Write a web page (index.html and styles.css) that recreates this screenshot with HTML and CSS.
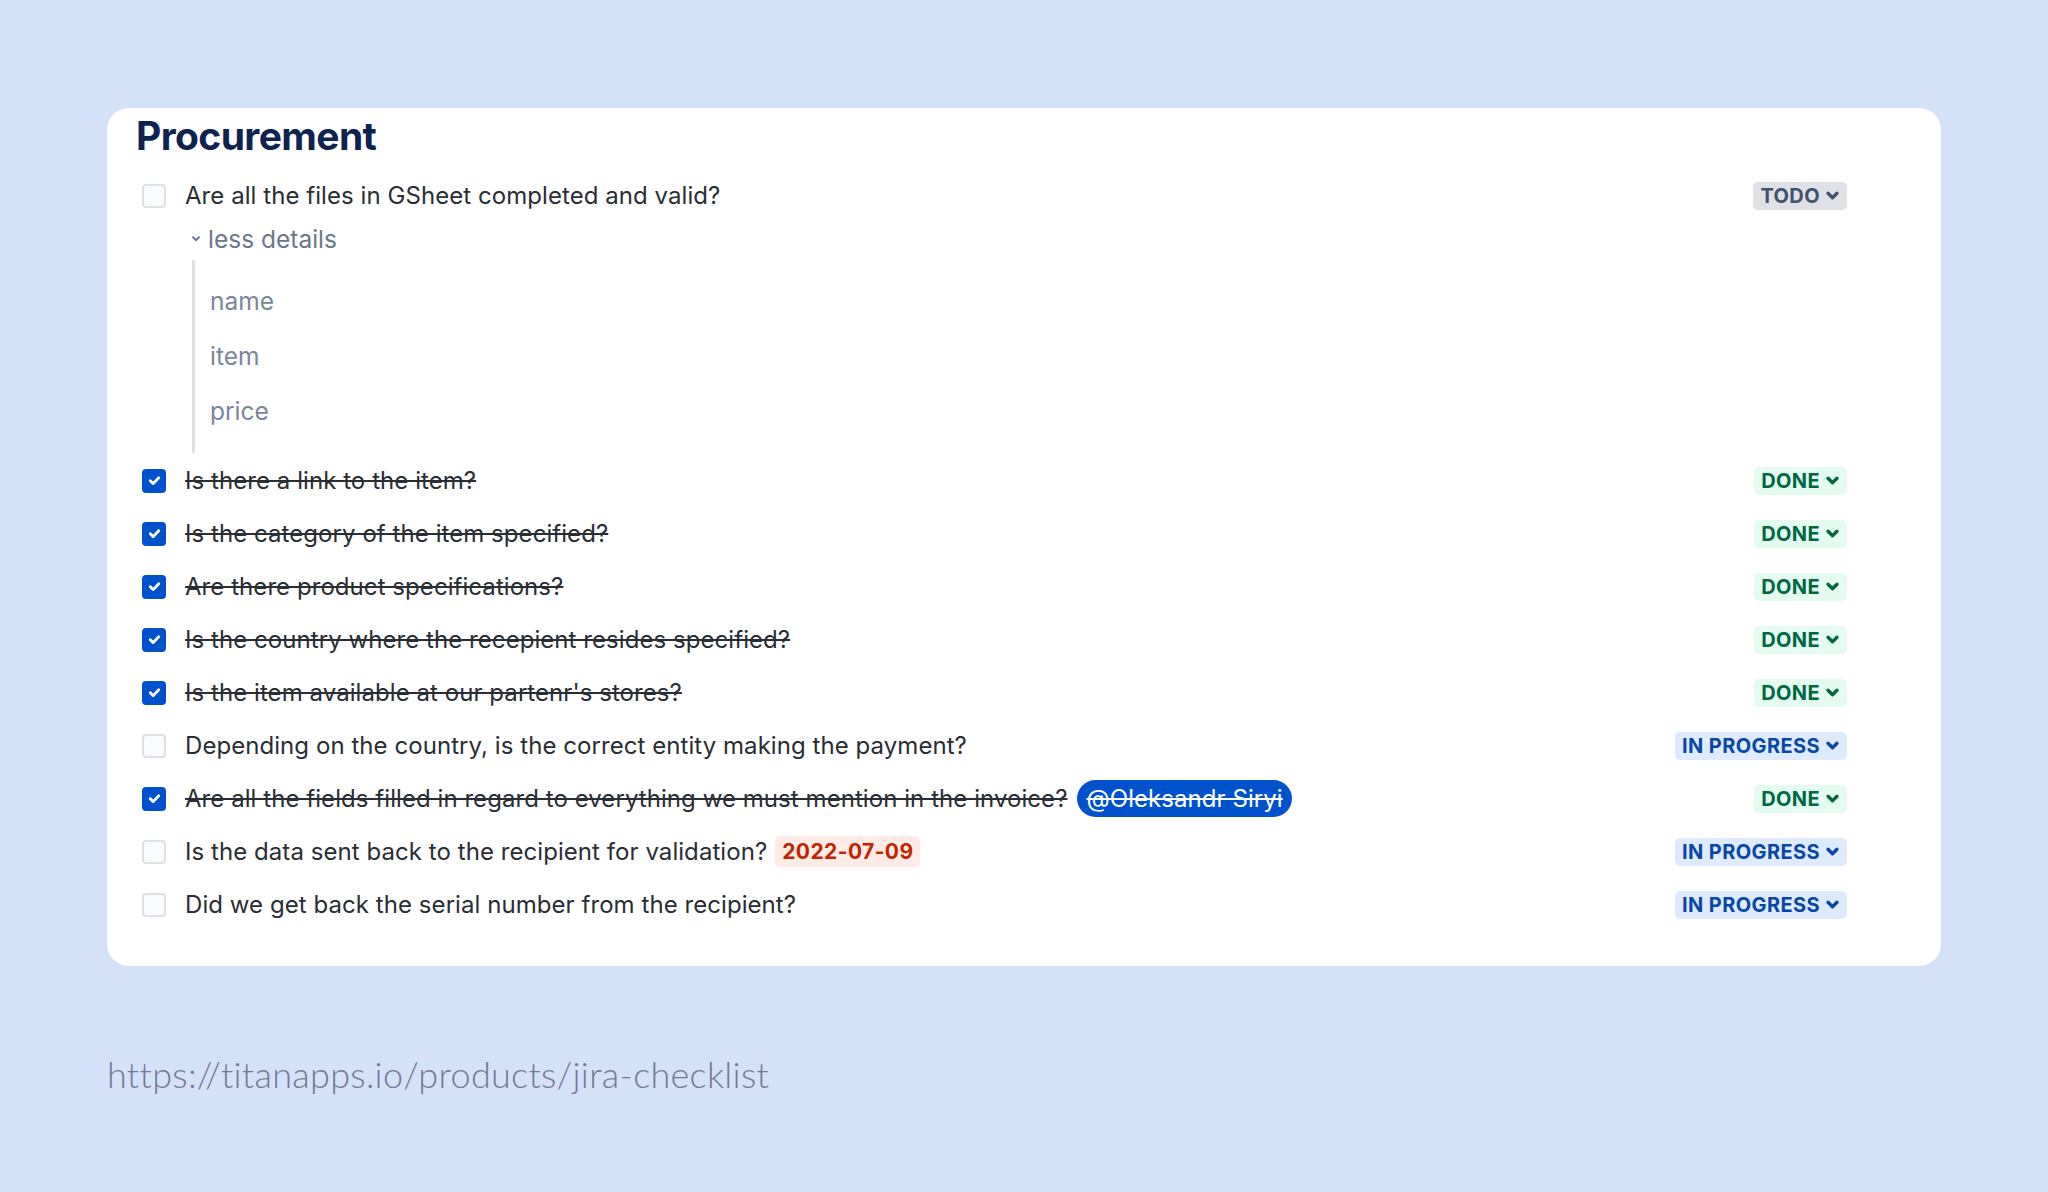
FILE: index.html
```html
<!DOCTYPE html>
<html lang="en">
<head>
    <meta charset="UTF-8" />
    <title>Procurement checklist</title>
    <link rel="stylesheet" href="styles.css">
</head>
<body>
    <div class="card">
        <h1>Procurement</h1>

        <div class="row">
            <span class="box"></span>
            <span class="text">Are all the files in GSheet completed and valid?</span>
            <span class="badge todo">TODO <svg viewBox="0 0 10 10"><path d="M2 3.5 L5 6.5 L8 3.5" /></svg></span>
        </div>
        <div class="toggle">
            <svg viewBox="0 0 10 10"><path d="M2.5 3.5 L5 6 L7.5 3.5" /></svg>
            <span>less details</span>
        </div>
        <div class="details">
            <div class="detail">name</div>
            <div class="detail">item</div>
            <div class="detail">price</div>
        </div>

        <div class="row checked">
            <span class="box"><svg viewBox="0 0 12 12"><path d="M3 6.2 L5.1 8.2 L9 4" /></svg></span>
            <span class="text">Is there a link to the item?</span>
            <span class="badge done">DONE <svg viewBox="0 0 10 10"><path d="M2 3.5 L5 6.5 L8 3.5" /></svg></span>
        </div>
        <div class="row checked">
            <span class="box"><svg viewBox="0 0 12 12"><path d="M3 6.2 L5.1 8.2 L9 4" /></svg></span>
            <span class="text">Is the category of the item specified?</span>
            <span class="badge done">DONE <svg viewBox="0 0 10 10"><path d="M2 3.5 L5 6.5 L8 3.5" /></svg></span>
        </div>
        <div class="row checked">
            <span class="box"><svg viewBox="0 0 12 12"><path d="M3 6.2 L5.1 8.2 L9 4" /></svg></span>
            <span class="text">Are there product specifications?</span>
            <span class="badge done">DONE <svg viewBox="0 0 10 10"><path d="M2 3.5 L5 6.5 L8 3.5" /></svg></span>
        </div>
        <div class="row checked">
            <span class="box"><svg viewBox="0 0 12 12"><path d="M3 6.2 L5.1 8.2 L9 4" /></svg></span>
            <span class="text">Is the country where the recepient resides specified?</span>
            <span class="badge done">DONE <svg viewBox="0 0 10 10"><path d="M2 3.5 L5 6.5 L8 3.5" /></svg></span>
        </div>
        <div class="row checked">
            <span class="box"><svg viewBox="0 0 12 12"><path d="M3 6.2 L5.1 8.2 L9 4" /></svg></span>
            <span class="text">Is the item available at our partenr's stores?</span>
            <span class="badge done">DONE <svg viewBox="0 0 10 10"><path d="M2 3.5 L5 6.5 L8 3.5" /></svg></span>
        </div>
        <div class="row">
            <span class="box"></span>
            <span class="text">Depending on the country, is the correct entity making the payment?</span>
            <span class="badge progress">IN PROGRESS <svg viewBox="0 0 10 10"><path d="M2 3.5 L5 6.5 L8 3.5" /></svg></span>
        </div>
        <div class="row checked">
            <span class="box"><svg viewBox="0 0 12 12"><path d="M3 6.2 L5.1 8.2 L9 4" /></svg></span>
            <span class="text">Are all the fields filled in regard to everything we must mention in the invoice?</span>
            <span class="mention">@Oleksandr Siryi</span>
            <span class="badge done">DONE <svg viewBox="0 0 10 10"><path d="M2 3.5 L5 6.5 L8 3.5" /></svg></span>
        </div>
        <div class="row">
            <span class="box"></span>
            <span class="text">Is the data sent back to the recipient for validation?</span>
            <span class="date">2022-07-09</span>
            <span class="badge progress">IN PROGRESS <svg viewBox="0 0 10 10"><path d="M2 3.5 L5 6.5 L8 3.5" /></svg></span>
        </div>
        <div class="row">
            <span class="box"></span>
            <span class="text">Did we get back the serial number from the recipient?</span>
            <span class="badge progress">IN PROGRESS <svg viewBox="0 0 10 10"><path d="M2 3.5 L5 6.5 L8 3.5" /></svg></span>
        </div>
    </div>

    <p class="link">https://titanapps.io/products/jira-checklist</p>
</body>
</html>
```

FILE: styles.css
```css
body {
    margin: 0;
    background: #d3e2f8;
    font-family: 'Inter', 'Roboto', sans-serif;
    padding: 108px 107px 0;
}

.card {
    background: #fff;
    border-radius: 22px;
    padding: 0 94px 35px 29px;
}

h1 {
    margin: 0;
    height: 61px;
    line-height: 56px;
    font-size: 39px;
    font-weight: 700;
    letter-spacing: -0.6px;
    color: #0f2350;
}

.row {
    display: flex;
    align-items: center;
    height: 53px;
    font-size: 24px;
    letter-spacing: 0.06px;
    color: #292d34;
}

.box {
    flex: none;
    width: 20px;
    height: 20px;
    margin: 0 19px 0 6px;
    border: 2px solid #dfe1e6;
    border-radius: 4px;
    background: #fafbfc;
    display: flex;
    align-items: center;
    justify-content: center;
}
.row.checked .box {
    background: #0052cc;
    border-color: #0052cc;
}
.box svg {
    width: 17px;
    height: 17px;
    fill: none;
    stroke: #fff;
    stroke-width: 2;
    stroke-linecap: round;
    stroke-linejoin: round;
}

.row.checked .text {
    text-decoration: line-through;
}

.mention {
    margin-left: 10px;
    padding: 0 9px;
    height: 37px;
    line-height: 37px;
    border-radius: 19px;
    background: #0052cc;
    color: #fff;
    text-decoration: line-through;
}

.date {
    margin-left: 8px;
    padding: 0 7px;
    height: 31px;
    line-height: 31px;
    border-radius: 5px;
    background: #ffebe6;
    color: #bf2600;
    font-weight: 700;
    font-size: 21px;
    letter-spacing: 0.4px;
}

.badge {
    margin-left: auto;
    display: flex;
    align-items: center;
    gap: 5px;
    height: 28px;
    padding: 0 7px;
    border-radius: 5px;
    font-size: 20px;
    font-weight: 700;
    letter-spacing: 0.4px;
}
.badge svg {
    width: 15px;
    height: 15px;
    fill: none;
    stroke: currentColor;
    stroke-width: 2.2;
    stroke-linecap: round;
    stroke-linejoin: round;
}
.badge.todo {
    background: #dfe1e6;
    color: #42526e;
}
.badge.done {
    background: #e3fcef;
    color: #006644;
}
.badge.progress {
    background: #deebff;
    color: #0747a6;
}

.toggle {
    display: flex;
    align-items: center;
    gap: 6px;
    height: 34px;
    padding-left: 54px;
    font-size: 24.5px;
    color: #6b778c;
}
.toggle svg {
    width: 12px;
    height: 12px;
    fill: none;
    stroke: #6b778c;
    stroke-width: 1.6;
    stroke-linecap: round;
}

.details {
    margin: 4px 0 1px 56px;
    padding: 14px 0 14px 15px;
    border-left: 3px solid #dfe1e6;
}
.detail {
    height: 55px;
    line-height: 55px;
    font-size: 24.5px;
    color: #7a869a;
}

.link {
    margin: 86px 0 0;
    font-family: 'Lato', sans-serif;
    font-weight: 300;
    font-size: 36px;
    letter-spacing: 0.3px;
    color: #737896;
}
```
